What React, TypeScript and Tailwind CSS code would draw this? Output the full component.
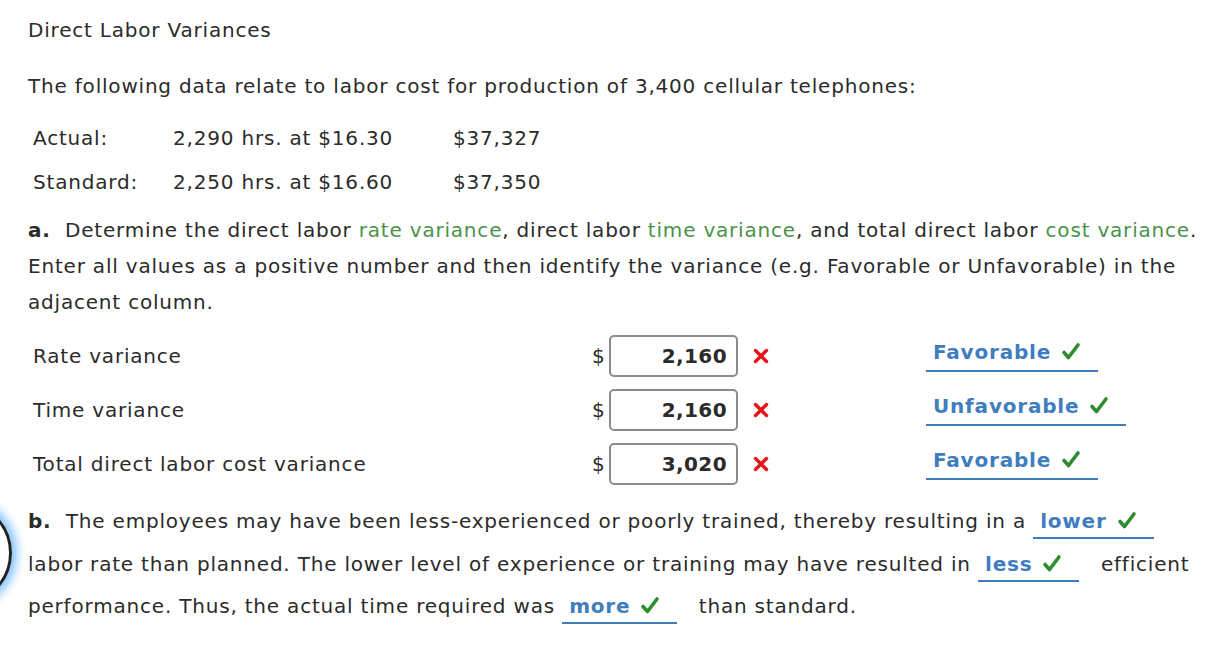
import type { ReactNode } from 'react';

const Check = () => (
  <svg width="20" height="20" viewBox="0 0 20 20" className="inline-block">
    <path d="M3 10.5 L7.5 15.5 L17 3" fill="none" stroke="#2e8b2e" strokeWidth="3.6" strokeLinecap="round" strokeLinejoin="round" />
  </svg>
);

const Cross = () => (
  <svg width="16" height="16" viewBox="0 0 16 16">
    <path d="M2.5 2.5 L13.5 13.5 M13.5 2.5 L2.5 13.5" stroke="#e8141b" strokeWidth="3.4" strokeLinecap="round" />
  </svg>
);

function Pick({ children, tall }: { children: ReactNode; tall?: boolean }) {
  return (
    <span
      className={`inline-flex items-center gap-[10px] pl-[7px] pr-[17px] border-b-2 border-[#3f7dbf] leading-[24px] font-bold text-[#3f7dbf] ${
        tall ? 'pb-[6px]' : 'pb-[4px]'
      }`}
    >
      {children}
      <Check />
    </span>
  );
}

const rows = [
  { label: 'Rate variance', value: '2,160', pick: 'Favorable' },
  { label: 'Time variance', value: '2,160', pick: 'Unfavorable' },
  { label: 'Total direct labor cost variance', value: '3,020', pick: 'Favorable' },
];

export default function App() {
  return (
    <div className="relative w-[1212px] h-[652px] overflow-hidden bg-white pl-[28px] font-['DejaVu_Sans',Verdana,sans-serif] text-[20px] tracking-[0.8px] text-[#2b2b2b]">
      <p className="pt-[12px] leading-[36px]">Direct Labor Variances</p>
      <p className="mt-[20px] leading-[36px]">
        The following data relate to labor cost for production of 3,400 cellular telephones:
      </p>

      <div className="mt-[16px] pl-[5px]">
        <div className="flex h-[44px] items-start leading-[36px]">
          <span className="w-[140px]">Actual:</span>
          <span className="w-[280px]">2,290 hrs. at $16.30</span>
          <span>$37,327</span>
        </div>
        <div className="flex h-[44px] items-start leading-[36px]">
          <span className="w-[140px]">Standard:</span>
          <span className="w-[280px]">2,250 hrs. at $16.60</span>
          <span>$37,350</span>
        </div>
      </div>

      <p className="mt-[4px] pr-[12px] leading-[36px]">
        <b>a.</b>&nbsp; Determine the direct labor <span className="text-[#4a9249]">rate variance</span>, direct labor{' '}
        <span className="text-[#4a9249]">time variance</span>, and total direct labor{' '}
        <span className="text-[#4a9249]">cost variance</span>. Enter all values as a positive number and then identify
        the variance (e.g. Favorable or Unfavorable) in the adjacent column.
      </p>

      <div className="mt-[9px]">
        {rows.map((r) => (
          <div key={r.label} className="flex h-[54px] items-center">
            <span className="w-[564px] pl-[5px]">{r.label}</span>
            <span className="w-[17px] tracking-normal">$</span>
            <span className="flex h-[42px] w-[129px] items-center justify-end rounded-[5px] border-2 border-[#8c8c8c] pr-[9px] font-bold tracking-[0.4px]">
              {r.value}
            </span>
            <span className="ml-[15px] w-[173px]">
              <Cross />
            </span>
            <span className="-mt-[4px]">
              <Pick tall>{r.pick}</Pick>
            </span>
          </div>
        ))}
      </div>

      <p className="mt-[9px] pr-[12px] leading-[42.5px]">
        <b>b.</b>&nbsp; The employees may have been less-experienced or poorly trained, thereby resulting in a{' '}
        <Pick>lower</Pick> labor rate than planned. The lower level of experience or training may have resulted in{' '}
        <Pick>less</Pick>&nbsp;&nbsp; efficient performance. Thus, the actual time required was <Pick>more</Pick>
        &nbsp;&nbsp; than standard.
      </p>

      <div className="absolute left-[-92px] top-[501px] h-[104px] w-[104px] rounded-full border-[3px] border-[#222] shadow-[0_0_10px_5px_rgba(90,175,255,0.75)]" />
    </div>
  );
}
